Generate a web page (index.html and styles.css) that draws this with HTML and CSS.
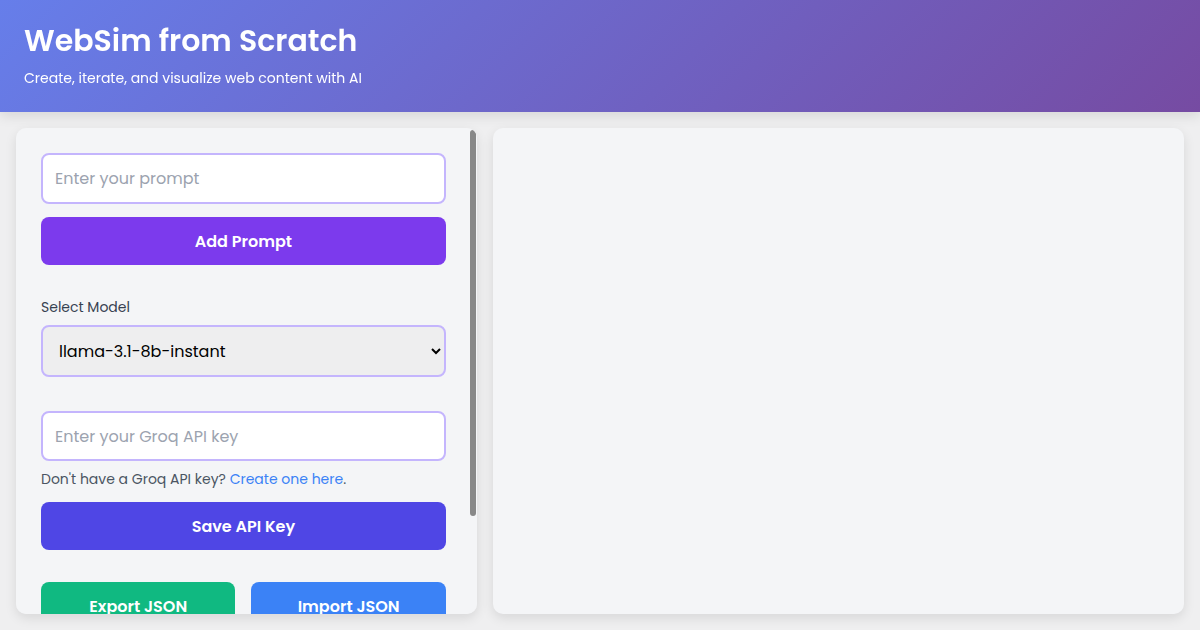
FILE: index.html
```html
<!DOCTYPE html>
<html lang="en">
<head>
    <meta charset="UTF-8">
    <meta name="viewport" content="width=device-width, initial-scale=1.0">
    <title>WebSim from Scratch</title>
    <link rel="stylesheet" href="styles.css">
</head>
<body>

<div class="header">
    <h1>WebSim from Scratch</h1>
    <p>Create, iterate, and visualize web content with AI</p>
</div>

<div class="main">
    <div class="sidebar">
        <div class="scroll-thumb"></div>

        <input type="text" class="field" placeholder="Enter your prompt">
        <button class="btn btn-purple">Add Prompt</button>

        <label class="label" for="modelSelect">Select Model</label>
        <select id="modelSelect" class="field select">
            <option>llama-3.1-8b-instant</option>
            <option>llama-3.1-70b-versatile</option>
            <option>mixtral-8x7b-32768</option>
        </select>

        <input type="password" class="field api-field" placeholder="Enter your Groq API key">
        <p class="hint">Don't have a Groq API key? <a href="#">Create one here</a>.</p>
        <button class="btn btn-indigo">Save API Key</button>

        <div class="json-row">
            <button class="btn btn-green">Export JSON</button>
            <button class="btn btn-blue">Import JSON</button>
        </div>

        <div class="history"></div>
    </div>

    <div class="preview"></div>
</div>

</body>
</html>
```

FILE: styles.css
```css
* {
    box-sizing: border-box;
}
body {
    font-family: 'Poppins', 'Inter', 'Noto Sans', sans-serif;
    background-color: #efeff0;
    margin: 0;
    padding: 0;
    height: 100vh;
    overflow: hidden;
    display: flex;
    flex-direction: column;
}
.header {
    background: linear-gradient(135deg, #667eea 0%, #764ba2 100%);
    color: #fff;
    padding: 21px 24px 24px;
    height: 112px;
    box-shadow: 0 4px 12px rgba(0, 0, 0, 0.1);
    position: relative;
    z-index: 1;
}
.header h1 {
    margin: 0;
    font-size: 30px;
    line-height: 40px;
    font-weight: 600;
}
.header p {
    margin: 7px 0 0;
    font-size: 14px;
    line-height: 21px;
}
.main {
    flex: 1;
    display: grid;
    grid-template-columns: minmax(0, 2fr) minmax(0, 3fr);
    gap: 16px;
    padding: 16px;
    min-height: 0;
}
.sidebar {
    position: relative;
    background-color: #f4f5f7;
    border-radius: 10px;
    box-shadow: 0 4px 12px rgba(0, 0, 0, 0.1);
    padding: 25px 31px 25px 25px;
    overflow-y: auto;
    scrollbar-width: none;
    display: flex;
    flex-direction: column;
}
/* the sandbox browser hides real scrollbars, so the thumb is drawn */
.scroll-thumb {
    position: absolute;
    top: 2px;
    right: 1px;
    width: 6px;
    height: 386px;
    background-color: #888;
    border-radius: 3px;
}
.preview {
    background-color: #f4f5f7;
    border-radius: 10px;
    box-shadow: 0 4px 12px rgba(0, 0, 0, 0.1);
}
.field {
    width: 100%;
    height: 51px;
    padding: 12px;
    border: 2px solid #c4b5fd;
    border-radius: 8px;
    background-color: #fff;
    font-family: inherit;
    font-size: 16px;
    color: #111;
    flex-shrink: 0;
}
.field::placeholder {
    color: #9ca3af;
}
.select {
    height: 52px;
    background-color: #eeeeef;
    color: #000;
}
.api-field {
    height: 50px;
    margin-top: 34px;
}
.label {
    margin: 32px 0 7px;
    font-size: 14px;
    line-height: 21px;
    color: #374151;
}
.hint {
    margin: 8px 0 12px;
    font-size: 14px;
    line-height: 21px;
    color: #4b5563;
}
.hint a {
    color: #3b82f6;
    text-decoration: none;
}
.btn {
    width: 100%;
    height: 48px;
    border: none;
    border-radius: 8px;
    color: #fff;
    font-family: inherit;
    font-size: 16px;
    font-weight: 600;
    cursor: pointer;
    flex-shrink: 0;
}
.btn-purple {
    background-color: #7c3aed;
    margin-top: 13px;
}
.btn-indigo {
    background-color: #4f46e5;
}
.btn-green {
    background-color: #10b981;
}
.btn-blue {
    background-color: #3b82f6;
}
.json-row {
    display: flex;
    gap: 16px;
    margin-top: 32px;
    flex-shrink: 0;
}
.json-row .btn {
    flex: 1;
    min-width: 0;
}
.history {
    min-height: 60px;
    flex-shrink: 0;
}
```
